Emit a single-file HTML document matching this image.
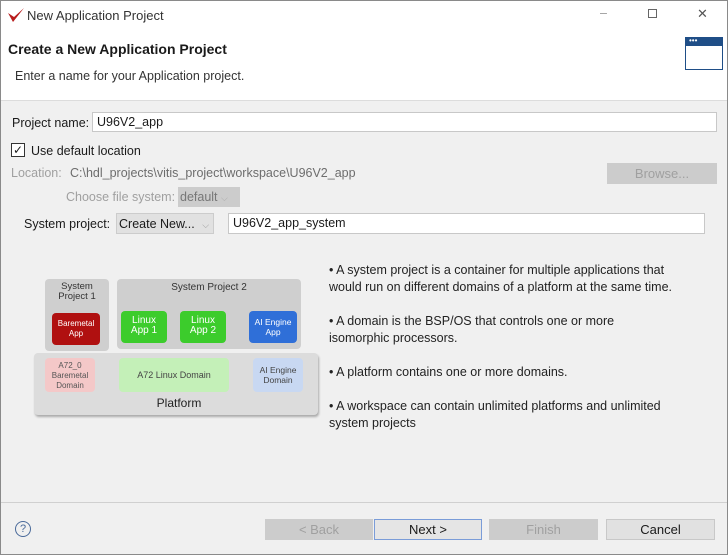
<!DOCTYPE html>
<html><head><meta charset="utf-8"><style>
*{margin:0;padding:0;box-sizing:border-box}
body{width:728px;height:555px;overflow:hidden;font-family:"Liberation Sans",sans-serif;font-size:12.5px;color:#1a1a1a;background:#f0f0f0;position:relative}
.a{position:absolute;white-space:nowrap}
.win{position:absolute;left:0;top:0;width:728px;height:555px;border:1px solid #8a8a8a}
.inp{position:absolute;background:#fff;border:1px solid #c8c8c8;padding:2px 4px;height:20px;line-height:15px}
.btn{position:absolute;height:21px;border:1px solid #c8c8c8;background:#e1e1e1;text-align:center;line-height:19px;font-size:13px}
.box{position:absolute;border-radius:4px;text-align:center;font-size:9px;line-height:10px;color:#fff}
</style></head><body>
<div class="a" style="left:0;top:0;width:728px;height:100px;background:#fff"></div>
<div class="a" style="left:0;top:100px;width:728px;height:1px;background:#dcdcdc"></div>
<svg class="a" style="left:7px;top:7px" width="18" height="16" viewBox="0 0 18 16"><path d="M1 6 L6 15 L17 1 L7 10 Z" fill="#b81c1c"/></svg>
<div class="a" style="left:27px;top:8px;font-size:13px;color:#333">New Application Project</div>
<div class="a" style="left:600px;top:6px;color:#999">–</div>
<div class="a" style="left:648px;top:9px;width:9px;height:9px;border:1px solid #666"></div>
<div class="a" style="left:697px;top:6px;color:#555;font-size:13px">✕</div>
<div class="a" style="left:8px;top:41px;font-size:14px;font-weight:bold">Create a New Application Project</div>
<div class="a" style="left:15px;top:69px;color:#333">Enter a name for your Application project.</div>
<div class="a" style="left:685px;top:37px;width:38px;height:33px;border:1px solid #1f4e87;background:#fff"><div style="height:8px;background:#1f4e87;color:#fff;font-size:8px;line-height:5px;padding-left:3px">•••</div></div>

<div class="a" style="left:12px;top:116px">Project name:</div>
<div class="inp" style="left:92px;top:112px;width:625px">U96V2_app</div>
<div class="a" style="left:11px;top:143px;width:14px;height:14px;border:1px solid #333;background:#fff;font-size:12px;line-height:12px;text-align:center">✓</div>
<div class="a" style="left:31px;top:144px">Use default location</div>
<div class="a" style="left:11px;top:166px;color:#a0a0a0">Location:</div>
<div class="a" style="left:66px;top:163px;width:537px;height:20px;background:#f0f0f0;padding:3px 4px;color:#6d6d6d">C:\hdl_projects\vitis_project\workspace\U96V2_app</div>
<div class="btn" style="left:607px;top:163px;width:110px;color:#a0a0a0;background:#cccccc;border-color:#cccccc">Browse...</div>
<div class="a" style="left:66px;top:190px;color:#a0a0a0">Choose file system:</div>
<div class="a" style="left:178px;top:187px;width:62px;height:20px;background:#ccc;padding:3px 2px;color:#777">default <span style="font-size:9px;color:#aaa">⌵</span></div>
<div class="a" style="left:24px;top:217px">System project:</div>
<div class="a" style="left:116px;top:213px;width:98px;height:21px;background:#e1e1e1;border:1px solid #ccc;padding:3px 2px">Create New... <span style="font-size:9px;color:#999;margin-left:4px">⌵</span></div>
<div class="inp" style="left:228px;top:213px;width:477px;height:21px">U96V2_app_system</div>

<div class="a" style="left:34px;top:353px;width:284px;height:62px;background:#dcdcdc;border-radius:4px;box-shadow:1px 2px 2px #aaa"></div>
<div class="a" style="left:45px;top:279px;width:64px;height:72px;background:#cfcfcf;border-radius:4px"></div>
<div class="a" style="left:117px;top:279px;width:184px;height:70px;background:#cfcfcf;border-radius:4px"></div>
<div class="a" style="left:47px;top:282px;width:60px;text-align:center;font-size:9.5px;line-height:10px;color:#333">System<br>Project 1</div>
<div class="a" style="left:117px;top:282px;width:184px;text-align:center;font-size:10px;color:#333">System Project 2</div>
<div class="box" style="left:52px;top:313px;width:48px;height:32px;background:#b01010;padding-top:6px;font-size:8px">Baremetal<br>App</div>
<div class="box" style="left:121px;top:311px;width:46px;height:32px;background:#3ccc2c;padding-top:5px;font-size:10px">Linux<br>App 1</div>
<div class="box" style="left:180px;top:311px;width:46px;height:32px;background:#3ccc2c;padding-top:5px;font-size:10px">Linux<br>App 2</div>
<div class="box" style="left:249px;top:311px;width:48px;height:32px;background:#2f6fd8;padding-top:6px;font-size:8.5px">AI Engine<br>App</div>
<div class="box" style="left:45px;top:358px;width:50px;height:34px;background:#f4c8c8;color:#555;padding-top:3px;font-size:8px">A72_0<br>Baremetal<br>Domain</div>
<div class="box" style="left:119px;top:358px;width:110px;height:34px;background:#c4f0b8;color:#444;line-height:34px;font-size:9px">A72 Linux Domain</div>
<div class="box" style="left:253px;top:358px;width:50px;height:34px;background:#c8d8f2;color:#444;padding-top:7px;font-size:8.5px">AI Engine<br>Domain</div>
<div class="a" style="left:34px;top:396px;width:290px;text-align:center;font-size:12px;color:#222">Platform</div>

<div class="a" style="left:329px;top:262px;line-height:17px;font-size:12.5px;color:#222">
• A system project is a container for multiple applications that<br>would run on different domains of a platform at the same time.<br><div style="height:17px"></div>
• A domain is the BSP/OS that controls one or more<br>isomorphic processors.<br><div style="height:17px"></div>
• A platform contains one or more domains.<br><div style="height:17px"></div>
• A workspace can contain unlimited platforms and unlimited<br>system projects</div>

<div class="a" style="left:0;top:502px;width:728px;height:1px;background:#d0d0d0"></div>
<div class="a" style="left:15px;top:521px;width:16px;height:16px;border:1px solid #4a6a9a;border-radius:50%;text-align:center;font-size:11px;line-height:14px;color:#4a6a9a">?</div>
<div class="btn" style="left:265px;top:519px;width:108px;color:#a0a0a0;background:#ccc;border-color:#ccc">&lt; Back</div>
<div class="btn" style="left:374px;top:519px;width:108px;border-color:#7a9cd8;background:#e5e5e5">Next &gt;</div>
<div class="btn" style="left:489px;top:519px;width:109px;color:#a0a0a0;background:#ccc;border-color:#ccc">Finish</div>
<div class="btn" style="left:606px;top:519px;width:109px">Cancel</div>
<div class="win"></div>
</body></html>
